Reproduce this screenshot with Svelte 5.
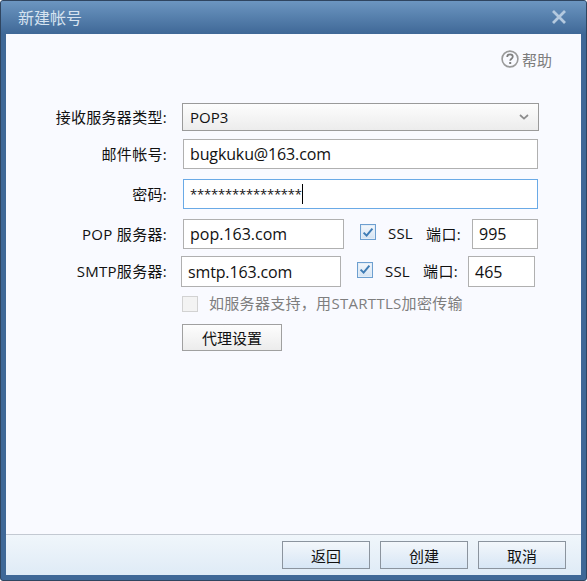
<script>
  const ports = [
    { label: 'POP 服务器:', host: 'pop.163.com', port: '995', cls: 'pop' },
    { label: 'SMTP服务器:', host: 'smtp.163.com', port: '465', cls: 'smtp' }
  ];
  const actions = ['返回', '创建', '取消'];
</script>

<div class="window">
  <header class="titlebar">
    <span class="title">新建帐号</span>
    <svg class="close" width="16" height="16" viewBox="0 0 16 16" aria-hidden="true">
      <path d="M2 2 L14 14 M14 2 L2 14" stroke="#b4c9df" stroke-width="2.8" fill="none" />
    </svg>
  </header>
  <main class="body">
    <div class="help">
      <svg width="18" height="18" viewBox="0 0 18 18" aria-hidden="true">
        <circle cx="9" cy="9" r="7.9" fill="none" stroke="#9a9a9a" stroke-width="1.6" />
        <path d="M6.2 7 C6.2 5.2 7.5 4.4 9 4.4 C10.7 4.4 11.8 5.4 11.8 6.8 C11.8 8.7 9.2 8.8 9.2 10.8" fill="none" stroke="#7f7f7f" stroke-width="1.7" />
        <rect x="8.2" y="12" width="2" height="2" fill="#7f7f7f" />
      </svg>
      <span>帮助</span>
    </div>

    <div class="form">
      <div class="row r-select">
        <span class="label">接收服务器类型:</span>
        <div class="select">
          <span>POP3</span>
          <svg width="10" height="6" viewBox="0 0 10 6" aria-hidden="true">
            <path d="M1 1 L5 4.6 L9 1" fill="none" stroke="#8c8c8c" stroke-width="1.7" />
          </svg>
        </div>
      </div>
      <div class="row r-mail">
        <span class="label">邮件帐号:</span>
        <div class="field wide">bugkuku@163.com</div>
      </div>
      <div class="row r-pass">
        <span class="label">密码:</span>
        <div class="field wide focus"><span class="stars">****************</span><i class="caret"></i></div>
      </div>
      {#each ports as p}
        <div class="row server {p.cls}">
          <span class="label">{p.label}</span>
          <div class="field host">{p.host}</div>
          <span class="check on">
            <svg width="12" height="11" viewBox="0 0 12 11" aria-hidden="true">
              <path d="M1.6 5.6 L4.6 8.6 L10.4 1.6" fill="none" stroke="#3f7cb5" stroke-width="2" />
            </svg>
          </span>
          <span class="ssl">SSL</span>
          <span class="port-label">端口:</span>
          <div class="field port">{p.port}</div>
        </div>
      {/each}
      <div class="row r-tls">
        <span class="check off"></span>
        <span class="tls">如服务器支持，用STARTTLS加密传输</span>
      </div>
      <div class="row r-proxy">
        <button class="proxy">代理设置</button>
      </div>
    </div>
  </main>
  <footer class="footer">
    {#each actions as a}
      <button class="action">{a}</button>
    {/each}
  </footer>
</div>

<style>
  :global(body) {
    margin: 0;
    background: #fff;
  }
  .window {
    box-sizing: border-box;
    width: 587px;
    height: 581px;
    display: flex;
    flex-direction: column;
    background: #3f6897;
    border: 1px solid #2f4560;
    border-radius: 3px;
    padding: 0 5px 5px;
    font-family: "Open Sans", "Noto Sans CJK SC", sans-serif;
    color: #111;
    font-size: 15px;
  }
  .titlebar {
    height: 33px;
    margin: 0 -5px;
    padding: 0 19px 0 17px;
    display: flex;
    align-items: center;
    justify-content: space-between;
    background: linear-gradient(#6c96c1, #3f6897);
    border-radius: 2px 2px 0 0;
    flex: none;
  }
  .title {
    color: #d6e3f0;
    font-size: 16px;
    margin-top: -2px;
  }
  .close {
    margin-top: -1px;
  }
  .body {
    flex: 1;
    background: #f9faff;
    min-height: 0;
  }
  .help {
    height: 18px;
    margin-top: 16px;
    padding-right: 29px;
    display: flex;
    justify-content: flex-end;
    align-items: center;
    gap: 3px;
    color: #7d7d7d;
    font-size: 15px;
  }
  .form {
    margin-top: 35px;
    display: flex;
    flex-direction: column;
  }
  .row {
    display: flex;
    align-items: center;
    flex: none;
  }
  .label {
    width: 161px;
    flex: none;
    text-align: right;
    white-space: nowrap;
    font-size: 15px;
    letter-spacing: 0.3px;
    margin-bottom: 2px;
  }
  .select,
  .field {
    box-sizing: border-box;
    display: flex;
    align-items: center;
    background: #fff;
    border: 1px solid #b0b0b0;
    font-size: 16px;
    color: #111;
  }
  .select {
    width: 357px;
    height: 28px;
    margin-left: 15px;
    padding: 0 9px 0 7px;
    justify-content: space-between;
    background: linear-gradient(#fdfdfd, #ececec);
    border-color: #9a9a9a;
    font-size: 15px;
  }
  .r-select { height: 28px; }
  .r-mail { height: 30px; margin-top: 8px; }
  .r-pass { height: 30px; margin-top: 10px; }
  .wide {
    width: 355px;
    height: 100%;
    margin-left: 16px;
    padding-left: 6px;
    letter-spacing: -0.13px;
  }
  .focus {
    border-color: #6aaae6;
    font-size: 13px;
    letter-spacing: 0;
  }
  .stars {
    letter-spacing: -0.17px;
  }
  .caret {
    display: block;
    width: 1px;
    height: 20px;
    background: #000;
  }
  .server {
    height: 30px;
    margin-top: 10px;
  }
  .smtp {
    height: 31px;
    margin-top: 7px;
  }
  .host {
    width: 161px;
    height: 100%;
    margin-left: 16px;
    padding-left: 6px;
  }
  .smtp .host {
    width: 160px;
    margin-left: 14px;
    letter-spacing: -0.15px;
  }
  .check {
    box-sizing: border-box;
    width: 16px;
    height: 16px;
    flex: none;
    display: flex;
    align-items: center;
    justify-content: center;
    margin-left: 16px;
    border: 1px solid #6d9fd0;
    background: linear-gradient(#f4f8fc, #d4e3f2);
  }
  .on {
    margin-bottom: 4px;
    box-shadow: inset 0 0 0 1px #e3edf7;
  }
  .off {
    margin-left: 176px;
    border-color: #d2d2d2;
    background: #f3f3f3;
  }
  .ssl {
    margin-left: 12px;
    width: 26px;
    font-size: 15px;
    white-space: nowrap;
    letter-spacing: 0.2px;
    margin-bottom: 2px;
  }
  .port-label {
    margin-left: 12px;
    width: 46px;
    white-space: nowrap;
    font-size: 15px;
    letter-spacing: 0.4px;
    margin-bottom: 2px;
  }
  .port {
    width: 66px;
    height: 100%;
    padding-left: 6px;
  }
  .smtp .port {
    margin-left: -1px;
    width: 67px;
  }
  .r-tls {
    height: 17px;
    margin-top: 8px;
  }
  .tls {
    margin-left: 11px;
    margin-bottom: 3px;
    color: #7e7e7e;
    font-size: 15px;
    white-space: nowrap;
    letter-spacing: 0.3px;
  }
  .r-proxy {
    height: 27px;
    margin-top: 12px;
  }
  button {
    font: inherit;
    color: #111;
    cursor: default;
    padding: 0;
  }
  .proxy {
    box-sizing: border-box;
    width: 100px;
    height: 27px;
    margin-left: 176px;
    border: 1px solid #a0a0a0;
    background: linear-gradient(#fdfdfd, #ececec);
    font-size: 15px;
  }
  .footer {
    height: 41px;
    flex: none;
    box-sizing: border-box;
    border-top: 1px solid #c3c9d2;
    background: linear-gradient(#f0f6fb, #dfebf6);
    display: flex;
    justify-content: flex-end;
    align-items: center;
    gap: 10px;
    padding-right: 15px;
  }
  .action {
    box-sizing: border-box;
    width: 88px;
    height: 28px;
    border: 1px solid #8b949e;
    background: linear-gradient(#f3f7fb, #d7e6f5);
    font-size: 15px;
  }
</style>
